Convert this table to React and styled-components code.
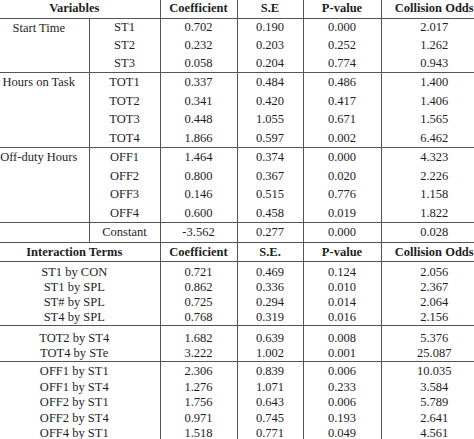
import styled, { createGlobalStyle } from "styled-components";

const GlobalStyle = createGlobalStyle`
  html, body {
    margin: 0;
    padding: 0;
    background: #ffffff;
  }
  body {
    overflow: hidden;
    font-family: "Liberation Serif", serif;
  }
`;

const LINE = "1px solid #555";

const Sheet = styled.div`
  width: 474px;
  height: 439px;
  overflow: hidden;
  background: #ffffff;
`;

const Table = styled.table`
  margin-left: -11px;
  width: 498px;
  table-layout: fixed;
  border-collapse: collapse;
  font-family: "Liberation Serif", serif;
  font-size: 12.5px;
  color: #1e1e1e;
`;

const Group = styled.tbody`
  border-top: ${(p) => (p.$line ? LINE : "none")};
`;

const Row = styled.tr`
  height: ${(p) => p.$h}px;
`;

const Cell = styled.td`
  padding: 0;
  padding-top: ${(p) => p.$pt || 0}px;
  text-align: center;
  vertical-align: ${(p) => (p.$top ? "top" : "middle")};
  border-left: ${(p) => (p.$first ? "none" : LINE)};
  line-height: 15px;
  white-space: nowrap;
  overflow: visible;
  font-family: "Liberation Serif", serif;
`;

const HeadCell = styled(Cell).attrs({ as: "th" })`
  font-weight: bold;
`;

const sections = [
  {
    label: "Start Time",
    h: 18.33,
    rows: [
      ["ST1", "0.702", "0.190", "0.000", "2.017"],
      ["ST2", "0.232", "0.203", "0.252", "1.262"],
      ["ST3", "0.058", "0.204", "0.774", "0.943"],
    ],
  },
  {
    label: "Hours on Task",
    h: 18.75,
    rows: [
      ["TOT1", "0.337", "0.484", "0.486", "1.400"],
      ["TOT2", "0.341", "0.420", "0.417", "1.406"],
      ["TOT3", "0.448", "1.055", "0.671", "1.565"],
      ["TOT4", "1.866", "0.597", "0.002", "6.462"],
    ],
  },
  {
    label: "Off-duty Hours",
    h: 18.75,
    rows: [
      ["OFF1", "1.464", "0.374", "0.000", "4.323"],
      ["OFF2", "0.800", "0.367", "0.020", "2.226"],
      ["OFF3", "0.146", "0.515", "0.776", "1.158"],
      ["OFF4", "0.600", "0.458", "0.019", "1.822"],
    ],
  },
];

const interactions = [
  {
    pad: 3,
    h: 15,
    rows: [
      ["ST1 by CON", "0.721", "0.469", "0.124", "2.056"],
      ["ST1 by SPL", "0.862", "0.336", "0.010", "2.367"],
      ["ST# by SPL", "0.725", "0.294", "0.014", "2.064"],
      ["ST4 by SPL", "0.768", "0.319", "0.016", "2.156"],
    ],
  },
  {
    pad: 4.5,
    h: 15.5,
    rows: [
      ["TOT2 by ST4", "1.682", "0.639", "0.008", "5.376"],
      ["TOT4 by STe", "3.222", "1.002", "0.001", "25.087"],
    ],
  },
  {
    pad: 2.5,
    h: 15.5,
    rows: [
      ["OFF1 by ST1", "2.306", "0.839", "0.006", "10.035"],
      ["OFF1 by ST4", "1.276", "1.071", "0.233", "3.584"],
      ["OFF2 by ST1", "1.756", "0.643", "0.006", "5.789"],
      ["OFF2 by ST4", "0.971", "0.745", "0.193", "2.641"],
      ["OFF4 by ST1", "1.518", "0.771", "0.049", "4.561"],
    ],
  },
];

const Values = ({ values }) =>
  values.map((v, i) => <Cell key={i}>{v}</Cell>);

export default function App() {
  return (
    <Sheet>
      <GlobalStyle />
      <Table>
        <colgroup>
          <col style={{ width: 100 }} />
          <col style={{ width: 71 }} />
          <col style={{ width: 77 }} />
          <col style={{ width: 66 }} />
          <col style={{ width: 78 }} />
          <col style={{ width: 106 }} />
        </colgroup>

        <Group>
          <Row $h={18}>
            <HeadCell $first colSpan={2}>
              Variables
            </HeadCell>
            <HeadCell>Coefficient</HeadCell>
            <HeadCell>S.E</HeadCell>
            <HeadCell>P-value</HeadCell>
            <HeadCell>Collision Odds</HeadCell>
          </Row>
        </Group>

        {sections.map((s) => (
          <Group $line key={s.label}>
            {s.rows.map(([code, ...vals], i) => (
              <Row $h={s.h} key={code}>
                {i === 0 && (
                  <Cell $first $top $pt={2} rowSpan={s.rows.length}>
                    {s.label}
                  </Cell>
                )}
                <Cell>{code}</Cell>
                <Values values={vals} />
              </Row>
            ))}
          </Group>
        ))}

        <Group $line>
          <Row $h={20}>
            <Cell $first />
            <Cell>Constant</Cell>
            <Values values={["-3.562", "0.277", "0.000", "0.028"]} />
          </Row>
        </Group>

        <Group $line>
          <Row $h={19}>
            <HeadCell $first colSpan={2}>
              Interaction Terms
            </HeadCell>
            <HeadCell>Coefficient</HeadCell>
            <HeadCell>S.E.</HeadCell>
            <HeadCell>P-value</HeadCell>
            <HeadCell>Collision Odds</HeadCell>
          </Row>
        </Group>

        {interactions.map((g, gi) => (
          <Group $line key={gi}>
            {g.rows.map(([term, ...vals], i) => (
              <Row $h={i === 0 ? g.h + g.pad : g.h} key={term}>
                <Cell $first colSpan={2} $pt={i === 0 ? g.pad : 0}>
                  {term}
                </Cell>
                {vals.map((v, j) => (
                  <Cell key={j} $pt={i === 0 ? g.pad : 0}>
                    {v}
                  </Cell>
                ))}
              </Row>
            ))}
          </Group>
        ))}
      </Table>
    </Sheet>
  );
}
